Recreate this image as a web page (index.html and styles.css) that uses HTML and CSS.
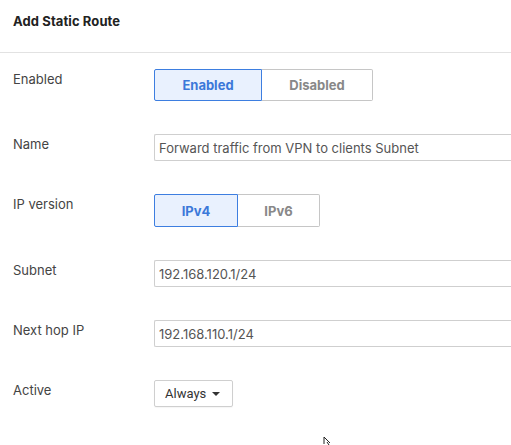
FILE: index.html
```html
<!DOCTYPE html>
<html lang="en">
<head>
<meta charset="utf-8">
<title>Add Static Route</title>
<link rel="stylesheet" href="styles.css">
</head>
<body>
<div class="panel">
  <div class="header">
    <h1 class="title">Add Static Route</h1>
  </div>
  <form class="form">
    <div class="row">
      <label class="label">Enabled</label>
      <div class="toggle toggle-enabled">
        <button type="button" class="seg seg-active seg-w1">Enabled</button>
        <button type="button" class="seg seg-w2">Disabled</button>
      </div>
    </div>
    <div class="row">
      <label class="label">Name</label>
      <input class="input" type="text" value="Forward traffic from VPN to clients Subnet">
    </div>
    <div class="row">
      <label class="label">IP version</label>
      <div class="toggle toggle-ip">
        <button type="button" class="seg seg-active seg-w3">IPv4</button>
        <button type="button" class="seg seg-w4">IPv6</button>
      </div>
    </div>
    <div class="row">
      <label class="label">Subnet</label>
      <input class="input" type="text" value="192.168.120.1/24">
    </div>
    <div class="row">
      <label class="label">Next hop IP</label>
      <input class="input" type="text" value="192.168.110.1/24">
    </div>
    <div class="row">
      <label class="label">Active</label>
      <button type="button" class="dropdown">Always <span class="caret"></span></button>
    </div>
  </form>
  <svg class="cursor" width="10" height="12" viewBox="0 0 10 12">
    <path d="M1 1 L1 8 M1 1 L7 7 M4 6 L6 9" stroke="#222" stroke-width="1" fill="none"/>
  </svg>
</div>
</body>
</html>
```
FILE: styles.css
```css
html, body {
  margin: 0;
  padding: 0;
  background: #fff;
  overflow: hidden;
}
body {
  font-family: Inter, "Noto Sans", sans-serif;
  width: 511px;
  height: 445px;
}
.panel {
  position: relative;
  height: 445px;
}
.header {
  height: 52px;
  border-bottom: 1px solid #e2e2e2;
  box-sizing: content-box;
}
.title {
  margin: 0;
  padding: 13px 0 0 13px;
  font-size: 13px;
  font-weight: 700;
  line-height: 16px;
  color: #222;
  letter-spacing: 0.1px;
}
.form {
  padding-top: 16px;
  display: flex;
  flex-direction: column;
  gap: 33px;
}
.row {
  display: flex;
  align-items: flex-start;
}
.label {
  width: 154px;
  padding-left: 13px;
  box-sizing: border-box;
  flex: none;
  font-size: 13px;
  line-height: 18px;
  padding-top: 1px;
  color: #444;
}
.toggle {
  display: flex;
  flex: none;
}
.seg {
  font-family: Inter, "Noto Sans", sans-serif;
  font-size: 13px;
  font-weight: 700;
  color: #888;
  background: #fff;
  border: 1px solid #c6c6c6;
  margin: 0;
  padding: 0;
  box-sizing: border-box;
}
.toggle-enabled .seg { height: 32px; }
.toggle-ip .seg { height: 33px; }
.seg:first-child {
  border-radius: 2px 0 0 2px;
}
.seg:last-child {
  border-left: none;
  border-radius: 0 2px 2px 0;
}
.seg-active {
  background: #e9f1fe;
  border-color: #3d7ee0;
  color: #3b78d9;
}
.seg-w1 { width: 108px; }
.seg-w2 { width: 111px; }
.seg-w3 { width: 84px; }
.seg-w4 { width: 82px; }
.input {
  width: 357px;
  flex: none;
  height: 27px;
  box-sizing: border-box;
  border: 1px solid #cfcfcf;
  border-right: none;
  border-radius: 2px 0 0 2px;
  padding: 0 0 0 4px;
  margin: 0;
  font-family: Inter, "Noto Sans", sans-serif;
  font-size: 13px;
  color: #555;
  background: #fff;
  outline: none;
}
.dropdown {
  height: 27px;
  width: 79px;
  box-sizing: border-box;
  border: 1px solid #cfcfcf;
  border-radius: 2px;
  background: #fff;
  margin: 0;
  padding: 0 0 0 10px;
  display: flex;
  align-items: center;
  gap: 6px;
  font-family: Roboto, "Liberation Sans", sans-serif;
  font-size: 13px;
  color: #333;
  box-shadow: 0 1px 1px rgba(0,0,0,0.04);
}
.caret {
  width: 0;
  height: 0;
  border-left: 4px solid transparent;
  border-right: 4px solid transparent;
  border-top: 4px solid #333;
}
.cursor {
  position: absolute;
  left: 323px;
  top: 436px;
}
```
